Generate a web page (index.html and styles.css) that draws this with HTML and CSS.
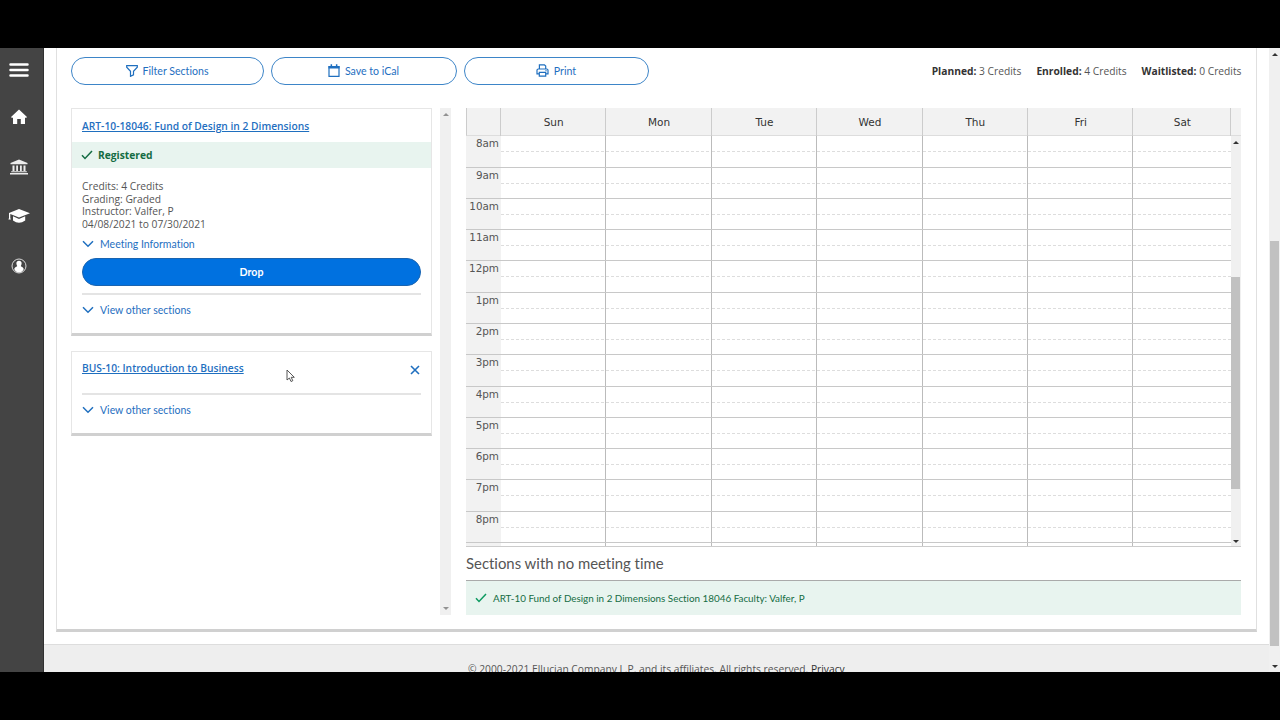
FILE: index.html
```html
<!DOCTYPE html>
<html lang="en">
<head>
  <meta charset="UTF-8" />
  <meta name="viewport" content="width=device-width, initial-scale=1" />
  <title>Plan your Degree and Register for Classes</title>
  <link rel="stylesheet" href="styles.css">
</head>
<body>
  <div class="screen">
    <nav class="sidebar">
      <svg class="nav-menu" width="20" height="14" viewBox="0 0 20 14"><path d="M1.5 1.5h17M1.5 7h17M1.5 12.5h17" stroke="#fff" stroke-width="2.5" stroke-linecap="round"/></svg>
      <svg width="18" height="16" viewBox="0 0 18 16"><path d="M9 .5 17 8l-1 1-1-.4V15h-4.2v-5H7.2v5H3V8.6L2 9 1 8z" fill="#fff"/></svg>
      <svg width="20" height="16" viewBox="0 0 20 16"><path d="M10 .5 18.5 4v1.3h-17V4zM3.5 6.5h2V12h-2zM7.2 6.5h1.8V12H7.2zM11 6.5h1.8V12H11zM14.5 6.5h2V12h-2zM2.2 12.3h15.6v1H2.2zM1 14h18v1.4H1z" fill="#ececec"/></svg>
      <svg width="22" height="16" viewBox="0 0 22 16"><path d="M11 1 22 5.2 11 9.6 2.3 6v4l.6 1.5H.4L1 10V4.9z" fill="#fff"/><path d="M5 8.3 11 11l6.2-2.7v4.2Q14 14.7 11 14.7T5 12.5z" fill="#fff"/></svg>
      <svg width="16" height="16" viewBox="0 0 16 16"><circle cx="8" cy="8" r="7" fill="none" stroke="#d8d8d8"/><path d="M8 2.8c2 0 2.8 1.4 2.6 3-.1 1-.5 1.6-.8 2.1 0 .8 2.9 1 2.9 3.3Q11 14.5 8 14.5t-4.7-3.3c0-2.3 2.9-2.5 2.9-3.3-.3-.5-.7-1.1-.8-2.1-.2-1.6.6-3 2.6-3z" fill="#fff"/></svg>
    </nav>

    <main class="page">
      <section class="panel">
        <div class="toolbar">
          <button class="btn btn-filter"><svg width="12" height="12" viewBox="0 0 12 12"><path d="M.7.7h10.6v1.5L7.5 6.3v3.5l-3 1.5v-5L.7 2.2z"/></svg><span>Filter Sections</span></button>
          <button class="btn btn-ical"><svg width="12" height="13" viewBox="0 0 12 13"><path d="M1 2.5h10v9.8H1z"/><path d="M.5 2h11v2.4H.5zM2.6.3h1.5v2H2.6zM7.9.3h1.5v2H7.9z" fill="currentColor" stroke="none"/></svg><span>Save to iCal</span></button>
          <button class="btn btn-print"><svg width="13" height="13" viewBox="0 0 13 13"><path d="M3.4 5V.8h5l1.3 1.3V5M3 9.8H1V6.3Q1 5 2.3 5h8.4Q12 5 12 6.3v3.5h-2M3.3 8.3h6.4v3.9H3.3z"/><path d="M9.5 6.7h1"/></svg><span>Print</span></button>
          <div class="totals">
            <span><b>Planned:</b> 3 Credits</span>
            <span><b>Enrolled:</b> 4 Credits</span>
            <span><b>Waitlisted:</b> 0 Credits</span>
          </div>
        </div>

        <div class="content">
          <div class="courses">
            <article class="card card-art">
              <div class="card-title"><a href="#">ART-10-18046: Fund of Design in 2 Dimensions</a></div>
              <div class="registered"><svg width="12" height="10" viewBox="0 0 12 10"><path d="m1 5.3 3 3.2L11 1"/></svg><span>Registered</span></div>
              <div class="details">
                <div>Credits: 4 Credits</div>
                <div>Grading: Graded</div>
                <div>Instructor: Valfer, P</div>
                <div>04/08/2021 to 07/30/2021</div>
              </div>
              <div class="toggle meeting"><svg width="12" height="8" viewBox="0 0 12 8"><path d="m1 1.2 5 5 5-5"/></svg><span>Meeting Information</span></div>
              <button class="drop">Drop</button>
              <div class="toggle other"><svg width="12" height="8" viewBox="0 0 12 8"><path d="m1 1.2 5 5 5-5"/></svg><span>View other sections</span></div>
            </article>

            <article class="card card-bus">
              <div class="card-title"><a href="#">BUS-10: Introduction to Business</a>
                <svg class="close" width="10" height="10" viewBox="0 0 10 10"><path d="m1 1 8 8M9 1 1 9"/></svg>
              </div>
              <div class="toggle other"><svg width="12" height="8" viewBox="0 0 12 8"><path d="m1 1.2 5 5 5-5"/></svg><span>View other sections</span></div>
            </article>
          </div>

          <div class="scrollbar list-scroll"><i class="arrow up"></i><i class="arrow down"></i></div>

          <div class="schedule">
            <div class="cal-head">
              <span></span><span>Sun</span><span>Mon</span><span>Tue</span><span>Wed</span><span>Thu</span><span>Fri</span><span>Sat</span><span></span>
            </div>
            <div class="cal-body">
              <div class="rows" id="rows"></div>
              <div class="scrollbar cal-scroll"><i class="arrow up"></i><div class="thumb"></div><i class="arrow down"></i></div>
            </div>
            <h2>Sections with no meeting time</h2>
            <div class="no-time"><svg width="12" height="10" viewBox="0 0 12 10"><path d="m1 5.3 3 3.2L11 1"/></svg><span>ART-10 Fund of Design in 2 Dimensions Section 18046 Faculty: Valfer, P</span></div>
          </div>
        </div>
      </section>
      <footer>© 2000-2021 Ellucian Company L.P. and its affiliates. All rights reserved. <a href="#">Privacy</a></footer>
    </main>

    <div class="scrollbar page-scroll"><i class="arrow up"></i><div class="thumb"></div><i class="arrow down"></i></div>
    <svg class="cursor" width="9" height="14" viewBox="0 0 9 14"><path d="M1 1v10l2.4-2 1.6 3.5 1.8-.8-1.6-3.4H8.3z" fill="#fff" stroke="#444" stroke-width=".9"/></svg>
  </div>

  <script>
    const hours = ["8am", "9am", "10am", "11am", "12pm", "1pm", "2pm", "3pm", "4pm", "5pm", "6pm", "7pm", "8pm", "9pm"];
    document.getElementById("rows").innerHTML = hours.map(hour =>
      `<div class="row"><span class="hour">${hour}</span>${'<span class="cell"></span>'.repeat(7)}</div>`
    ).join("");
  </script>
</body>
</html>
```
FILE: styles.css
```css
* {
  box-sizing: border-box;
}
body {
  margin: 0;
  padding: 48px 0;
  height: 720px;
  overflow: hidden;
  background: #000;
  color: #555;
  font: 10.25px/13px "Open Sans", sans-serif;
}
svg {
  display: block;
  flex: none;
  fill: none;
}
a {
  color: #1f6fbf;
}
.screen {
  display: flex;
  height: 624px;
  position: relative;
  background: #fff;
  overflow: hidden;
}
.sidebar {
  width: 44px;
  background: #444;
  border-right: 1px solid #303030;
  display: flex;
  flex-direction: column;
  align-items: center;
  gap: 33.8px;
  padding: 15px 5px 0 0;
}
.nav-menu {
  margin-bottom: -2px;
}
.page {
  width: 1225px;
}
.panel {
  width: 1200.5px;
  height: 584px;
  margin: 0 0 12px 12px;
  border: solid #e0e0e0;
  border-width: 0 1px;
  border-bottom: 3px solid #d0d0d0;
  padding: 9px 14px 0;
}
.toolbar {
  display: flex;
  gap: 7px;
  height: 28px;
}
.btn {
  height: 28px;
  padding: 0 1px 1px 0;
  border: 1px solid #3d85c8;
  border-radius: 14px;
  background: #fff;
  color: #1f6fbf;
  display: flex;
  align-items: center;
  justify-content: center;
  gap: 5px;
  font: 10.6px Lato, sans-serif;
}
.btn svg {
  stroke: currentColor;
  stroke-width: 1.2;
}
.btn-filter {
  width: 193px;
}
.btn-ical {
  width: 186px;
}
.btn-print {
  width: 185px;
}
.totals {
  margin-left: auto;
  display: flex;
  gap: 15px;
  align-items: center;
  white-space: nowrap;
}
.totals b {
  color: #333;
}
.content {
  display: flex;
  margin-top: 23px;
}
.courses {
  width: 361px;
}
.card {
  border: 1px solid #e6e6e6;
  border-bottom: 3px solid #d0d0d0;
}
.card-art {
  height: 228px;
}
.card-bus {
  height: 85px;
  margin-top: 15px;
}
.card-title {
  height: 33px;
  padding: 2px 11px 0 10px;
  display: flex;
  align-items: center;
  justify-content: space-between;
  font-weight: 600;
}
.card-bus .card-title {
  height: 34px;
  padding: 0 11px 1px 10px;
}
.close {
  stroke: #1f6fbf;
  stroke-width: 1.6;
  margin-top: 2px;
}
.registered {
  height: 26px;
  padding-left: 9px;
  background: #e8f4ef;
  display: flex;
  align-items: center;
  gap: 5px;
  color: #146c43;
  font-weight: 700;
}
.registered svg {
  stroke: #146c43;
  stroke-width: 1.5;
}
.details {
  padding: 12px 10px 0;
  line-height: 12.7px;
}
.toggle {
  display: flex;
  align-items: center;
  gap: 6px;
  color: #1f6fbf;
  font: 10.5px Lato, sans-serif;
}
.toggle svg {
  stroke: currentColor;
  stroke-width: 1.5;
}
.meeting {
  height: 27px;
  padding-left: 10px;
}
.drop {
  display: block;
  width: 339px;
  height: 28px;
  margin-left: 10px;
  border: 1px solid #1a64b0;
  border-radius: 14px;
  background: #0071e0;
  color: #fff;
  padding: 0;
  font: bold 10.6px Lato, sans-serif;
}
.other {
  margin: 7px 10px 0;
  height: 32px;
  border-top: 2px solid #e4e4e4;
}
.scrollbar {
  display: flex;
  flex-direction: column;
  background: #f0f0f0;
}
.arrow {
  width: 0;
  height: 0;
  border: 3px solid transparent;
  margin: 0 auto;
}
.up {
  border-top: 0;
  border-bottom-color: #333;
}
.down {
  border-bottom: 0;
  border-top-color: #333;
  margin-top: auto;
}
.list-scroll {
  width: 11px;
  height: 507px;
  margin: 0 15px 0 8px;
  padding: 5px 0;
}
.list-scroll .arrow {
  opacity: 0.5;
}
.schedule {
  width: 775px;
}
.cal-head {
  height: 28px;
  display: grid;
  grid-template-columns: 34px repeat(6, 105.4px) 98px 10px;
  background: #f2f2f2;
  border-bottom: 1px solid #ddd;
  border-left: 1px solid #ccc;
  color: #333;
  font: 10.5px/28px "DejaVu Sans", sans-serif;
  text-align: center;
}
.cal-head span {
  border-right: 1px solid #ccc;
  padding-left: 1px;
}
.cal-head span:last-child {
  border: 0;
}
.cal-body {
  display: flex;
  height: 411px;
  overflow: hidden;
  border-bottom: 1px solid #ccc;
}
.rows {
  width: 765px;
}
.row {
  display: grid;
  grid-template-columns: 35px repeat(6, 105.4px) 97.6px;
  height: 31.3px;
  border-bottom: 1px solid #c8c8c8;
}
.row:first-child {
  height: 31.5px;
}
.hour {
  background: #f2f2f2;
  text-align: right;
  padding-right: 2px;
  font: 10.4px/14px "DejaVu Sans", sans-serif;
}
.cell {
  border-right: 1px solid #bbb;
  background: linear-gradient(#fff, #fff) 0 0 / 100% 15px no-repeat, repeating-linear-gradient(90deg, #ddd 0 3px, #fff 3px 5px) 0 15px / 100% 1px no-repeat;
}
.cell:last-child {
  border: 0;
}
.cal-scroll {
  width: 10px;
  padding: 5px 0 3px;
}
.cal-scroll .thumb {
  flex: none;
  height: 212px;
  margin: 133px 1px 0 0;
  background: #c1c1c1;
}
h2 {
  margin: 0;
  height: 34px;
  border-bottom: 1px solid #aaa;
  color: #555;
  font: 14.9px/32px Lato, sans-serif;
}
.no-time {
  height: 34px;
  background: #e8f4ef;
  display: flex;
  align-items: center;
  gap: 6px;
  padding-left: 9px;
  color: #146c43;
  font: 9.86px Lato, sans-serif;
}
.no-time svg {
  stroke: #0d9a60;
  stroke-width: 1.5;
}
.btn, h2, .toggle, .drop, .no-time {
  font-variant-ligatures: none;
}
footer {
  height: 60px;
  background: #eee;
  border-top: 1px solid #ddd;
  padding: 18px 0 0 424px;
  white-space: nowrap;
}
footer a {
  color: #333;
}
.page-scroll {
  width: 11px;
  padding: 5px 0 4px;
}
.page-scroll .thumb {
  width: 9px;
  height: 405px;
  margin: 185px auto 0;
  background: #c1c1c1;
}
.cursor {
  position: absolute;
  left: 286px;
  top: 321px;
}
```
